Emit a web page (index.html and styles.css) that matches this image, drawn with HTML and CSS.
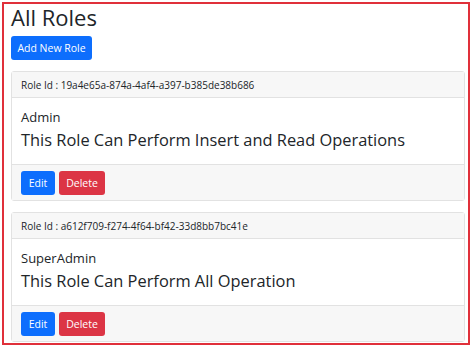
FILE: index.html
```html
<!DOCTYPE html>
<html lang="en">
<head>
    <meta charset="UTF-8">
    <meta name="viewport" content="width=device-width, initial-scale=1.0">
    <title>All Roles</title>
    <link rel="stylesheet" href="styles.css">
</head>
<body>

    <div class="frame">
        <h1>All Roles</h1>
        <button class="btn btn-primary add-btn">Add New Role</button>

        <div class="card">
            <div class="card-header">Role Id : 19a4e65a-874a-4af4-a397-b385de38b686</div>
            <div class="card-body">
                <h5>Admin</h5>
                <h3>This Role Can Perform Insert and Read Operations</h3>
            </div>
            <div class="card-footer">
                <button class="btn btn-primary">Edit</button>
                <button class="btn btn-danger">Delete</button>
            </div>
        </div>

        <div class="card">
            <div class="card-header">Role Id : a612f709-f274-4f64-bf42-33d8bb7bc41e</div>
            <div class="card-body">
                <h5>SuperAdmin</h5>
                <h3>This Role Can Perform All Operation</h3>
            </div>
            <div class="card-footer">
                <button class="btn btn-primary">Edit</button>
                <button class="btn btn-danger">Delete</button>
            </div>
        </div>
    </div>

</body>
</html>
```

FILE: styles.css
```css
* { margin: 0; padding: 0; box-sizing: border-box; font-family: "Open Sans", sans-serif; }
body { background: white; color: #212529; padding: 2px; }
.frame {
    width: 468px; height: 343px; border: 2px solid #e0303a;
    padding: 0 3px 0 7px; overflow: hidden;
}
h1 { font-size: 22px; font-weight: 500; line-height: 27px; }
.btn {
    display: block; border: none; border-radius: 3px; color: white; font-size: 10.5px;
    height: 24px; padding: 0; white-space: nowrap; cursor: pointer;
}
.btn-primary { background: #0d6efd; }
.btn-danger { background: #dc3545; }
.add-btn { margin-top: 5px; width: 81px; }
.card {
    border: 1px solid #e2e2e2; border-radius: 3px; margin-top: 11px;
}
.card-header {
    background: #f7f7f7; border-bottom: 1px solid #e2e2e2;
    height: 26px; padding: 1px 9px 0; font-size: 10px; line-height: 24px;
}
.card-body { padding: 9px 9px 0; height: 66px; }
h5 { font-size: 13px; font-weight: 500; line-height: 20px; }
h3 { font-size: 16.4px; font-weight: 500; line-height: 26px; }
.card-footer {
    background: #f7f7f7; border-top: 1px solid #e2e2e2;
    height: 36px; padding: 6px 9px; display: flex; gap: 4px;
}
.card-footer .btn-primary { width: 34px; }
.card-footer .btn-danger { width: 46px; }
```
